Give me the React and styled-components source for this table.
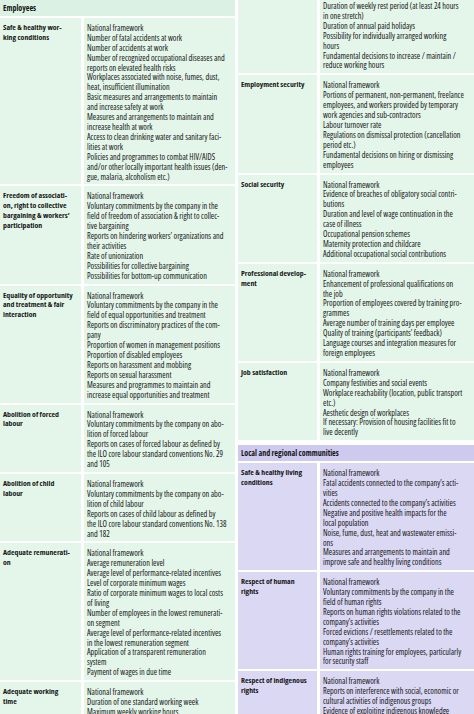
import React from "react";
import styled, { createGlobalStyle } from "styled-components";

const GlobalStyle = createGlobalStyle`
  html, body {
    margin: 0;
    padding: 0;
    background: #ffffff;
  }
  body {
    width: 474px;
    height: 714px;
    overflow: hidden;
    font-family: "Open Sans", "Liberation Sans", Arial, sans-serif;
    font-stretch: 87.5%;
    font-size: 8.2px;
    font-weight: 400;
    line-height: 9.9px;
    color: #151515;
  }
`;

const tones = {
  green: { header: "#dbf1e3", cell: "#e4f6ea" },
  purple: { header: "#cec9ef", cell: "#dbd8f4" },
};

const Page = styled.div`
  display: grid;
  grid-template-columns: 235px 236px;
  column-gap: 3px;
  align-items: start;
  height: 714px;
  overflow: hidden;
`;

const Column = styled.div`
  display: flex;
  flex-direction: column;
  gap: 5px;
`;

const Section = styled.div`
  display: flex;
  flex-direction: column;
  gap: 2px;
`;

const SectionHeader = styled.div`
  background: ${(p) => p.$tone.header};
  padding: 3px 3px;
  font-weight: 700;
  font-stretch: 75%;
  font-size: 8px;
  white-space: nowrap;
`;

const Row = styled.div`
  display: grid;
  grid-template-columns: ${(p) => p.$labelWidth}px 1fr;
  column-gap: 3px;
`;

const Label = styled.div`
  background: ${(p) => p.$tone.cell};
  padding: ${(p) => (p.$continued ? 1 : 5)}px 2px 3px 3px;
  font-weight: 700;
  font-stretch: 75%;
  font-size: 7.8px;
`;

const Content = styled.div`
  background: ${(p) => p.$tone.cell};
  padding: ${(p) => (p.$continued ? 1 : 5)}px 2px 3px 3px;
`;

const Line = styled.div`
  white-space: nowrap;
`;

const leftColumn = [
  {
    tone: "green",
    title: "Employees",
    rows: [
      {
        label: ["Safe & healthy wor-", "king conditions"],
        lines: [
          "National framework",
          "Number of fatal accidents at work",
          "Number of accidents at work",
          "Number of recognized occupational diseases and",
          "reports on elevated health risks",
          "Workplaces associated with noise, fumes, dust,",
          "heat, insufficient illumination",
          "Basic measures and arrangements to maintain",
          "and increase safety at work",
          "Measures and arrangements to maintain and",
          "increase health at work",
          "Access to clean drinking water and sanitary faci-",
          "lities at work",
          "Policies and programmes to combat HIV/AIDS",
          "and/or other locally important health issues (den-",
          "gue, malaria, alcoholism etc.)",
        ],
      },
      {
        label: [
          "Freedom of associati-",
          "on, right to collective",
          "bargaining & workers\u2019",
          "participation",
        ],
        lines: [
          "National framework",
          "Voluntary commitments by the company in the",
          "field of freedom of association & right to collec-",
          "tive bargaining",
          "Reports on hindering workers\u2019 organizations and",
          "their activities",
          "Rate of unionization",
          "Possibilities for collective bargaining",
          "Possibilities for bottom-up communication",
        ],
      },
      {
        label: ["Equality of opportunity", "and treatment & fair", "interaction"],
        lines: [
          "National framework",
          "Voluntary commitments by the company in the",
          "field of equal opportunities and treatment",
          "Reports on discriminatory practices of the com-",
          "pany",
          "Proportion of women in management positions",
          "Proportion of disabled employees",
          "Reports on harassment and mobbing",
          "Reports on sexual harassment",
          "Measures and programmes to maintain and",
          "increase equal opportunities and treatment",
        ],
      },
      {
        label: ["Abolition of forced", "labour"],
        lines: [
          "National framework",
          "Voluntary commitments by the company on abo-",
          "lition of forced labour",
          "Reports on cases of forced labour as defined by",
          "the ILO core labour standard conventions No. 29",
          "and 105",
        ],
      },
      {
        label: ["Abolition of child", "labour"],
        lines: [
          "National framework",
          "Voluntary commitments by the company on abo-",
          "lition of child labour",
          "Reports on cases of child labour as defined by",
          "the ILO core labour standard conventions No. 138",
          "and 182",
        ],
      },
      {
        label: ["Adequate remunerati-", "on"],
        lines: [
          "National framework",
          "Average remuneration level",
          "Average level of performance-related incentives",
          "Level of corporate minimum wages",
          "Ratio of corporate minimum wages to local costs",
          "of living",
          "Number of employees in the lowest remunerati-",
          "on segment",
          "Average level of performance-related incentives",
          "in the lowest remuneration segment",
          "Application of a transparent remuneration",
          "system",
          "Payment of wages in due time",
        ],
      },
      {
        label: ["Adequate working", "time"],
        lines: [
          "National framework",
          "Duration of one standard working week",
          "Maximum weekly working hours",
        ],
      },
    ],
  },
];

const rightColumn = [
  {
    tone: "green",
    rows: [
      {
        continued: true,
        label: [],
        lines: [
          "Duration of weekly rest period (at least 24 hours",
          "in one stretch)",
          "Duration of annual paid holidays",
          "Possibility for individually arranged working",
          "hours",
          "Fundamental decisions to increase / maintain /",
          "reduce working hours",
        ],
      },
      {
        label: ["Employment security"],
        lines: [
          "National framework",
          "Portions of permanent, non-permanent, freelance",
          "employees, and workers provided by temporary",
          "work agencies and sub-contractors",
          "Labour turnover rate",
          "Regulations on dismissal protection (cancellation",
          "period etc.)",
          "Fundamental decisions on hiring or dismissing",
          "employees",
        ],
      },
      {
        label: ["Social security"],
        lines: [
          "National framework",
          "Evidence of breaches of obligatory social contri-",
          "butions",
          "Duration and level of wage continuation in the",
          "case of illness",
          "Occupational pension schemes",
          "Maternity protection and childcare",
          "Additional occupational social contributions",
        ],
      },
      {
        label: ["Professional develop-", "ment"],
        lines: [
          "National framework",
          "Enhancement of professional qualifications on",
          "the job",
          "Proportion of employees covered by training pro-",
          "grammes",
          "Average number of training days per employee",
          "Quality of training (participants\u2019 feedback)",
          "Language courses and integration measures for",
          "foreign employees",
        ],
      },
      {
        label: ["Job satisfaction"],
        lines: [
          "National framework",
          "Company festivities and social events",
          "Workplace reachability (location, public transport",
          "etc.)",
          "Aesthetic design of workplaces",
          "If necessary: Provision of housing facilities fit to",
          "live decently",
        ],
      },
    ],
  },
  {
    tone: "purple",
    title: "Local and regional communities",
    rows: [
      {
        label: ["Safe & healthy living", "conditions"],
        lines: [
          "National framework",
          "Fatal accidents connected to the company\u2019s acti-",
          "vities",
          "Accidents connected to the company\u2019s activities",
          "Negative and positive health impacts for the",
          "local population",
          "Noise, fume, dust, heat and wastewater emissi-",
          "ons",
          "Measures and arrangements to maintain and",
          "improve safe and healthy living conditions",
        ],
      },
      {
        label: ["Respect of human", "rights"],
        lines: [
          "National framework",
          "Voluntary commitments by the company in the",
          "field of human rights",
          "Reports on human rights violations related to the",
          "company\u2019s activities",
          "Forced evictions / resettlements related to the",
          "company\u2019s activities",
          "Human rights training for employees, particularly",
          "for security staff",
        ],
      },
      {
        label: ["Respect of indigenous", "rights"],
        lines: [
          "National framework",
          "Reports on interference with social, economic or",
          "cultural activities of indigenous groups",
          "Evidence of exploiting indigenous knowledge",
          "and resources",
        ],
      },
    ],
  },
];

function TableColumn({ sections, labelWidth }) {
  return (
    <Column>
      {sections.map((section, si) => {
        const tone = tones[section.tone];
        return (
          <Section key={si}>
            {section.title && <SectionHeader $tone={tone}>{section.title}</SectionHeader>}
            {section.rows.map((row, ri) => (
              <Row key={ri} $labelWidth={labelWidth}>
                <Label $tone={tone} $continued={row.continued}>
                  {row.label.map((l, li) => (
                    <Line key={li}>{l}</Line>
                  ))}
                </Label>
                <Content $tone={tone} $continued={row.continued}>
                  {row.lines.map((l, li) => (
                    <Line key={li}>{l}</Line>
                  ))}
                </Content>
              </Row>
            ))}
          </Section>
        );
      })}
    </Column>
  );
}

export default function App() {
  return (
    <>
      <GlobalStyle />
      <Page>
        <TableColumn sections={leftColumn} labelWidth={81} />
        <TableColumn sections={rightColumn} labelWidth={79} />
      </Page>
    </>
  );
}
